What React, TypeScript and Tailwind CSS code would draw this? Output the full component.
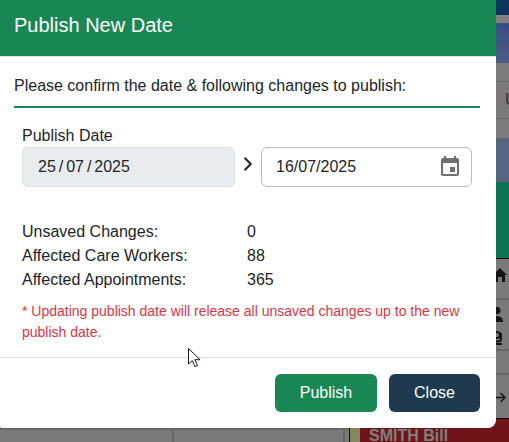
import { ChevronRight } from 'lucide-react';

const stats = [
  { label: 'Unsaved Changes:', value: '0' },
  { label: 'Affected Care Workers:', value: '88' },
  { label: 'Affected Appointments:', value: '365' },
];

function BackgroundStrip() {
  return (
    <div className="ml-auto flex h-[419px] w-[13px] flex-col overflow-hidden text-[#1c1c1c]">
      <div className="h-[15px] shrink-0 bg-[#0b3559]" />
      <div className="h-[8px] shrink-0 bg-[#808080]" />
      <div className="h-[40px] shrink-0 bg-gradient-to-b from-[#344f82] to-[#4a5d84]" />
      <div className="h-[19px] shrink-0 border-b border-[#666666] bg-[#7c7c7c]" />
      <div className="flex h-[37px] shrink-0 items-center border-b border-[#666666] bg-[#7a7a7a] pl-[9px] text-[16px] text-[#2a2f3a]">U</div>
      <div className="h-[19px] shrink-0 bg-[#7c7c7c]" />
      <div className="h-[44px] shrink-0 bg-[#56657f]" />
      <div className="h-[77px] shrink-0 border-b border-black bg-[#0e7356]" />
      <div className="h-[41px] shrink-0 border-b-2 border-[#666666] bg-[#7a7a7a] pt-[9px]">
        <svg viewBox="0 0 11 14" className="h-[14px] w-[11px] fill-[#161616]">
          <path d="M4 0-3 7h2v7h3V9h4v5h3V7h2z" />
        </svg>
      </div>
      <div className="h-[51px] shrink-0 border-b-2 border-[#666666] bg-[#7a7a7a] pt-[7px]">
        <svg viewBox="0 0 8 38" className="h-[38px] w-[8px] fill-none stroke-[#161616] stroke-2">
          <circle cx="1" cy="3.5" r="2.5" fill="#161616" />
          <path d="M-4 14c1-5 9-5 10 0z" fill="#161616" />
          <circle cx="1" cy="28" r="3" />
          <path d="M5 26v6c0 3-4 3-6 2M-1 37h7" />
        </svg>
      </div>
      <div className="h-[24px] shrink-0 border-b-2 border-[#666666] bg-[#7a7a7a]" />
      <div className="flex h-[44px] shrink-0 items-start border-b border-black bg-[#7a7a7a] pt-[17px]">
        <svg viewBox="0 0 10 11" className="h-[11px] w-[10px] fill-none stroke-[#161616] stroke-[1.5]">
          <path d="M0 5.5h9M4.5 1 9 5.5 4.5 10" />
        </svg>
      </div>
    </div>
  );
}

function BackgroundBottom() {
  return (
    <div className="flex h-[23px] bg-[#7a7a7a]">
      <div className="flex w-[349px] items-start pt-[9px]">
        <div className="h-[2px] w-full bg-[#666666]" />
      </div>
      <div className="w-[1px] bg-[#111111]" />
      <div className="w-[10px] bg-[#858560]" />
      <div className="flex-1 overflow-hidden bg-[#6f1519] pl-[9px] pt-[8px] text-[16px] leading-[18px] font-bold whitespace-nowrap text-[#7f7f7f]">
        SMITH Bill
      </div>
    </div>
  );
}

export default function App() {
  return (
    <div className="relative h-[442px] w-[509px] overflow-hidden bg-[#7a7a7a] font-['Liberation_Sans',Arial,sans-serif] text-[16px] text-[#212529]">
      <BackgroundStrip />
      <BackgroundBottom />
      {/* column rules in the table behind the dialog */}
      <div className="absolute top-[428px] left-[172px] h-[14px] w-[2px] bg-[#666666]" />
      <div className="absolute top-[428px] left-[343px] h-[14px] w-[2px] bg-[#666666]" />

      <div className="absolute top-0 left-0 flex h-[428px] w-[496px] flex-col rounded-br-[8px] rounded-bl-[2px] bg-white">
        <div className="flex h-[57px] shrink-0 items-center border-b border-[#dee2e6] bg-[#198754] px-[14px] pb-[6px] text-[20px] text-white">
          Publish New Date
        </div>

        <div className="flex-1 px-[14px] pt-[17px]">
          <div className="mr-[2px] h-[34px] border-b-2 border-[#198754] leading-[24px]">
            Please confirm the date &amp; following changes to publish:
          </div>

          <div className="px-2 pt-[17px]">
            <div className="leading-[22px]">Publish Date</div>
            <div className="flex w-[450px] items-center">
              <div className="flex h-[40px] w-[213px] items-center rounded-[6px] border border-[#dee2e6] bg-[#e9ecef] pl-[15px] [word-spacing:-1.5px]">
                25 / 07 / 2025
              </div>
              <div className="flex w-[26px] justify-center pb-[7px]">
                <ChevronRight size={22} strokeWidth={2.5} className="text-[#2b2b2b]" />
              </div>
              <div className="flex h-[40px] w-[211px] items-center justify-between rounded-[6px] border border-[#bdbdbd] bg-white pr-[9px] pl-[14px]">
                16/07/2025
                <svg viewBox="0 0 24 24" className="h-[24px] w-[24px] fill-[#6f6f6f]">
                  <path d="M17 12h-5v5h5v-5zM16 1v2H8V1H6v2H5c-1.11 0-1.99.9-1.99 2L3 19c0 1.1.89 2 2 2h14c1.1 0 2-.9 2-2V5c0-1.1-.9-2-2-2h-1V1h-2zm3 18H5V8h14v11z" />
                  <path d="M5 5h14v3H5z" />
                </svg>
              </div>
            </div>

            <div className="mt-[33px] flex flex-col">
              {stats.map((s) => (
                <div key={s.label} className="flex leading-[24px]">
                  <div className="w-[225px]">{s.label}</div>
                  <div>{s.value}</div>
                </div>
              ))}
            </div>

            <p className="mt-[9px] text-[14px] leading-[21px] text-[#dc3545]">
              * Updating publish date will release all unsaved changes up to the new publish date.
            </p>
          </div>
        </div>

        <div className="flex h-[71px] shrink-0 justify-end gap-[12px] border-t border-[#dee2e6] px-[16px] pt-[16px]">
          <button className="h-[38px] w-[102px] rounded-[6px] bg-[#198754] text-white">Publish</button>
          <button className="h-[38px] w-[91px] rounded-[6px] bg-[#1f3a4f] text-white">Close</button>
        </div>
      </div>

      <svg viewBox="0 0 13 20" className="absolute top-[348px] left-[188px] h-[20px] w-[13px]">
        <path d="M.5.5v15.5l3.8-3.4 2.6 6 2.6-1.1-2.6-5.8h5.2z" fill="#fff" stroke="#1a1a1a" strokeWidth="1" />
      </svg>
    </div>
  );
}
